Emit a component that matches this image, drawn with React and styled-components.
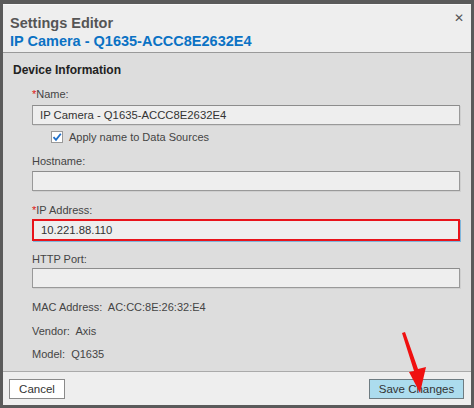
import React from "react";
import styled, { createGlobalStyle } from "styled-components";

const GlobalStyle = createGlobalStyle`
    html, body {
        margin: 0;
        padding: 0;
        background: #5a5a5a;
    }
    body {
        font-family: "Liberation Sans", Arial, sans-serif;
    }
`;

// outer window with dark frame
const Window = styled.div`
    position: relative;
    box-sizing: border-box;
    width: 474px;
    height: 408px;
    border-style: solid;
    border-color: #5a5a5a;
    border-width: 4px 3px 3px 3px;
    display: flex;
    flex-direction: column;
    background: #dddddd;
`;

const Header = styled.div`
    position: relative;
    height: 49px;
    box-sizing: border-box;
    padding: 9px 0 0 7px;
    background: #eeeeee;
    border-top: 1px solid #f8f8f8;
    border-bottom: 1px solid #999;
`;

const Title = styled.div`
    font-size: 14.5px;
    font-weight: bold;
    line-height: 18px;
    color: ${({ accent }) => (accent ? "#0b72c4" : "#555")};
`;

const Close = styled.span`
    position: absolute;
    right: 7px;
    top: 7px;
    font-size: 12px;
    line-height: 12px;
    color: #555;
`;

const Body = styled.div`
    flex: 1;
    display: flex;
    flex-direction: column;
    padding: 10px 11px 0 10px;
`;

const Section = styled.div`
    font-size: 12px;
    font-weight: bold;
    line-height: 14px;
    color: #222;
`;

const Field = styled.div`
    display: flex;
    flex-direction: column;
    padding-left: 19px;
    margin-top: ${({ top }) => top}px;
`;

const Label = styled.div`
    font-size: 11px;
    line-height: 14px;
    color: #444;
    margin-bottom: ${({ gap }) => gap || 3}px;
`;

const Star = styled.span`
    color: #d11;
`;

const Input = styled.div`
    box-sizing: border-box;
    height: ${({ error }) => (error ? 22 : 20)}px;
    background: #eeeeee;
    border: ${({ error }) => (error ? "2px solid #e8141b" : "1px solid #999")};
    border-top-color: ${({ error }) => (error ? "#e8141b" : "#8c8c8c")};
    box-shadow: ${({ error }) => (error ? "1px 1px 0 #7fb6dc" : "1px 1px 0 #cfcfcf")};
    padding-left: 7px;
    font-size: 11.3px;
    line-height: 18px;
    color: #333;
`;

const CheckRow = styled.div`
    display: flex;
    align-items: center;
    gap: 6px;
    height: 16px;
    margin-top: 4px;
    padding-left: 38px;
    font-size: 11px;
    color: #444;
`;

const Box = styled.span`
    box-sizing: border-box;
    width: 12px;
    height: 12px;
    background: #fff;
    border: 1px solid #999;
    display: flex;
    align-items: center;
    justify-content: center;
`;

const Info = styled.div`
    padding-left: 19px;
    margin-top: ${({ top }) => top}px;
    font-size: 11px;
    line-height: 14px;
    color: #444;
    white-space: pre;
`;

const Footer = styled.div`
    height: 34px;
    box-sizing: border-box;
    background: #eeeeee;
    border-top: 1px solid #aaa;
    display: flex;
    justify-content: space-between;
    align-items: center;
    padding: 0 7px 0 6px;
`;

const Button = styled.div`
    box-sizing: border-box;
    height: 20px;
    display: flex;
    align-items: center;
    justify-content: center;
    white-space: nowrap;
    font-size: 11.5px;
    color: #333;
    background: ${({ primary }) => (primary ? "#acdcee" : "#ffffff")};
    border: 1px solid ${({ primary }) => (primary ? "#6e7c82" : "#8a8a8a")};
    width: ${({ w }) => w}px;
`;

const Arrow = styled.svg`
    position: absolute;
    left: -3px;
    top: -4px;
    pointer-events: none;
`;

const Check = () => (
    <svg width="10" height="10" viewBox="0 0 10 10">
        <path d="M1.5 5.2 L4 7.8 L8.8 1.8" fill="none" stroke="#1f6fc9" strokeWidth="1.8" />
    </svg>
);

const App = () => {
    return (
        <>
            <GlobalStyle />
            <Window>
                <Header>
                    <Title>Settings Editor</Title>
                    <Title accent>IP Camera - Q1635-ACCC8E2632E4</Title>
                    <Close>✕</Close>
                </Header>
                <Body>
                    <Section>Device Information</Section>
                    <Field top={10}>
                        <Label gap={4}><Star>*</Star>Name:</Label>
                        <Input>IP Camera - Q1635-ACCC8E2632E4</Input>
                    </Field>
                    <CheckRow>
                        <Box><Check /></Box>
                        Apply name to Data Sources
                    </CheckRow>
                    <Field top={9}>
                        <Label>Hostname:</Label>
                        <Input />
                    </Field>
                    <Field top={12}>
                        <Label gap={2}><Star>*</Star>IP Address:</Label>
                        <Input error>10.221.88.110</Input>
                    </Field>
                    <Field top={11}>
                        <Label gap={2}>HTTP Port:</Label>
                        <Input />
                    </Field>
                    <Info top={12}>MAC Address:  AC:CC:8E:26:32:E4</Info>
                    <Info top={10}>Vendor:  Axis</Info>
                    <Info top={9}>Model:  Q1635</Info>
                </Body>
                <Footer>
                    <Button w={56}>Cancel</Button>
                    <Button primary w={95}>Save Changes</Button>
                </Footer>
                <Arrow width="474" height="408" viewBox="0 0 474 408">
                    <polygon
                        points="402,333 405,332 418,369 426,367 420,393 409,372 414,371"
                        fill="#f01010"
                    />
                </Arrow>
            </Window>
        </>
    );
};

export default App;
